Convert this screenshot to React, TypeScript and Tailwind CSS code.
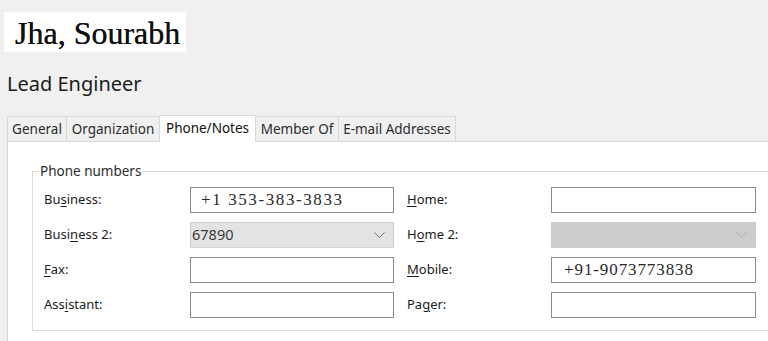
import { ReactNode } from "react"

const sans = "font-['Noto_Sans','Open_Sans',sans-serif]"

type Field = {
    label: ReactNode
    value?: string
    kind: "text" | "combo" | "disabled"
    pad?: string
}

const u = (s: string) => <span className="underline underline-offset-2">{s}</span>

const left: Field[] = [
    { label: <>Bu{u("s")}iness:</>, value: "+1 353-383-3833", kind: "text", pad: "pl-[10px] tracking-[1.6px]" },
    { label: <>Busi{u("n")}ess 2:</>, value: "67890", kind: "combo" },
    { label: <>{u("F")}ax:</>, kind: "text" },
    { label: <>Ass{u("i")}stant:</>, kind: "text" },
]

const right: Field[] = [
    { label: <>{u("H")}ome:</>, kind: "text" },
    { label: <>H{u("o")}me 2:</>, kind: "disabled" },
    { label: <>{u("M")}obile:</>, value: "+91-9073773838", kind: "text", pad: "pl-[12px] tracking-[0.9px]" },
    { label: <>Pa{u("g")}er:</>, kind: "text" },
]

const tabs = [
    { name: "General", w: "w-[60px]" },
    { name: "Organization", w: "w-[94px]" },
    { name: "Phone/Notes", w: "w-[97px]" },
    { name: "Member Of", w: "w-[84px]" },
    { name: "E-mail Addresses", w: "w-[118px]" },
]

function Chevron({ color }: { color: string }) {
    return (
        <svg width="11" height="6" viewBox="0 0 11 6" fill="none" stroke={color} strokeWidth="1">
            <path d="M0.5 0.5 L5.5 5.5 L10.5 0.5" />
        </svg>
    )
}

function Input({ field }: { field: Field }) {
    if (field.kind === "combo") {
        return (
            <div className="h-[26px] bg-[#e3e3e3] border border-[#d2d2d2] flex items-center justify-between pl-[1px] pr-[8px] text-[14.5px] text-[#3a3a3a]">
                <span>{field.value}</span>
                <Chevron color="#777" />
            </div>
        )
    }
    if (field.kind === "disabled") {
        return (
            <div className="h-[26px] bg-[#cccccc] border border-[#cccccc] flex items-center justify-end pr-[8px]">
                <Chevron color="#b0b0b0" />
            </div>
        )
    }
    return (
        <div className={`h-[26px] bg-white border border-[#8a8a8a] flex items-center font-['Liberation_Serif',serif] text-[17px] text-[#2a2a2a] ${field.pad ?? ""}`}>
            {field.value}
        </div>
    )
}

export default function App() {
    return (
        <div className={`w-[768px] h-[341px] bg-[#f0f0f0] overflow-hidden flex flex-col ${sans} text-[#1b1b1b]`}>
            <div className="mt-[12px] ml-[4px] w-[182px] h-[40px] bg-white flex items-center pl-[11px]">
                <span className="font-['Liberation_Serif',serif] text-[32px] leading-none text-[#111] pt-[2px] [text-shadow:0_0_0.6px_#111]">Jha, Sourabh</span>
            </div>

            <div className="ml-[7px] mt-[18px] text-[20px] leading-[28px]">Lead Engineer</div>

            <div className="ml-[7px] mt-[17px] flex items-end h-[26px] relative z-10">
                {tabs.map(tab => {
                    const active = tab.name === "Phone/Notes"
                    return (
                        <div
                            key={tab.name}
                            className={
                                active
                                    ? `${tab.w} h-[27px] -mb-px bg-white border border-b-0 border-[#d9d9d9] flex items-center justify-center text-[13.5px] text-[#111] -ml-px pb-[2px]`
                                    : `${tab.w} h-[25px] bg-[#f0f0f0] border border-b-0 border-[#d9d9d9] flex items-center justify-center text-[13.5px] text-[#2b2b2b] -ml-px first:ml-0`
                            }
                        >
                            {tab.name}
                        </div>
                    )
                })}
            </div>

            <div className="ml-[7px] flex-1 bg-white border-l border-t border-[#d9d9d9] pt-[20px]">
                <fieldset className="ml-[24px] -mr-[20px] border border-[#dcdcdc] pl-[11px] pt-[7px] pb-[12px]">
                    <legend className="-ml-[5px] px-[1px] text-[13.5px] leading-[18px] text-[#2b2b2b]">Phone numbers</legend>
                    <div className="grid grid-cols-[146px_204px_13px_144px_205px] gap-y-[9px] text-[13px]">
                        {left.map((f, i) => (
                            <Row key={i} l={f} r={right[i]} />
                        ))}
                    </div>
                </fieldset>
            </div>
        </div>
    )
}

function Row({ l, r }: { l: Field; r: Field }) {
    return (
        <>
            <div className="flex items-center h-[26px]">{l.label}</div>
            <Input field={l} />
            <div />
            <div className="flex items-center h-[26px]">{r.label}</div>
            <Input field={r} />
        </>
    )
}
